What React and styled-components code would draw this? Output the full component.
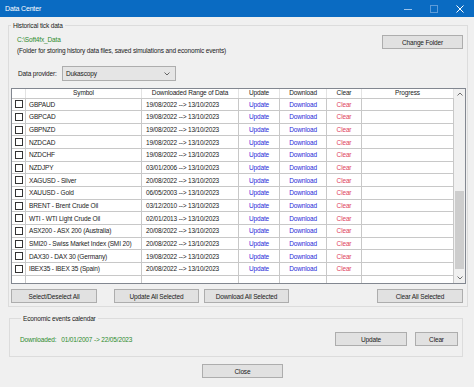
import React from 'react';
import styled, { createGlobalStyle } from 'styled-components';

const GlobalStyle = createGlobalStyle`
    html, body {
        margin: 0;
        padding: 0;
        background: #f0f0f0;
    }
    * {
        box-sizing: border-box;
    }
`

const symbols = [
    ['GBPAUD', '19/08/2022'],
    ['GBPCAD', '19/08/2022'],
    ['GBPNZD', '19/08/2022'],
    ['NZDCAD', '19/08/2022'],
    ['NZDCHF', '19/08/2022'],
    ['NZDJPY', '03/01/2006'],
    ['XAGUSD - Silver', '20/08/2022'],
    ['XAUUSD - Gold', '06/05/2003'],
    ['BRENT - Brent Crude Oil', '03/12/2010'],
    ['WTI - WTI Light Crude Oil', '02/01/2013'],
    ['ASX200 - ASX 200 (Australia)', '20/08/2022'],
    ['SMI20 - Swiss Market Index (SMI 20)', '20/08/2022'],
    ['DAX30 - DAX 30 (Germany)', '19/08/2022'],
    ['IBEX35 - IBEX 35 (Spain)', '20/08/2022'],
]

const COLS = '14px 116px 97px 41px 47px 35px 92px';

const App = () => {
    return (
        <Window>
            <GlobalStyle />
            <TitleBar>
                <Title>Data Center</Title>
                <Controls>
                    <svg width="8" height="8" viewBox="0 0 8 8"><path d="M0 4.5h8" stroke="#9cc3ea" strokeWidth="1" /></svg>
                    <svg width="8" height="8" viewBox="0 0 8 8"><rect x="0.5" y="0.5" width="7" height="7" fill="none" stroke="#5d9bd8" strokeWidth="1" /></svg>
                    <svg width="8" height="8" viewBox="0 0 8 8"><path d="M0.5 0.5l7 7M7.5 0.5l-7 7" stroke="#ffffff" strokeWidth="1" /></svg>
                </Controls>
            </TitleBar>

            <Content>
                <Group>
                    <Legend>Historical tick data</Legend>
                    <FolderRow>
                        <div>
                            <GreenText>C:\Soft4fx_Data</GreenText>
                            <Hint>(Folder for storing history data files, saved simulations and economic events)</Hint>
                        </div>
                        <Button $w={81}>Change Folder</Button>
                    </FolderRow>
                    <ProviderRow>
                        <Label>Data provider:</Label>
                        <Select>
                            <span>Dukascopy</span>
                            <svg width="6" height="4" viewBox="0 0 6 4"><path d="M0.5 0.5l2.5 2.5 2.5-2.5" fill="none" stroke="#555" strokeWidth="0.9" /></svg>
                        </Select>
                    </ProviderRow>

                    <Grid>
                        <GridBody>
                            <HeaderRow>
                                <HeadCell />
                                <HeadCell>Symbol</HeadCell>
                                <HeadCell>Downloaded Range of Data</HeadCell>
                                <HeadCell>Update</HeadCell>
                                <HeadCell>Download</HeadCell>
                                <HeadCell>Clear</HeadCell>
                                <HeadCell>Progress</HeadCell>
                            </HeaderRow>
                            {symbols.map(([name, from]) => (
                                <Row key={name}>
                                    <Cell $align="center"><Check /></Cell>
                                    <Cell>{name}</Cell>
                                    <Cell $pad={4}>{from} --&gt; 13/10/2023</Cell>
                                    <Cell $align="center" $color="#2a2ad8">Update</Cell>
                                    <Cell $align="center" $color="#2a2ad8">Download</Cell>
                                    <Cell $align="center" $color="#e0405e">Clear</Cell>
                                    <Cell />
                                </Row>
                            ))}
                            <Row>
                                <Cell /><Cell /><Cell /><Cell /><Cell /><Cell /><Cell />
                            </Row>
                        </GridBody>
                        <ScrollBar>
                            <Arrow>
                                <svg width="6" height="4" viewBox="0 0 6 4"><path d="M0.5 3.5l2.5-2.5 2.5 2.5" fill="none" stroke="#606060" strokeWidth="0.9" /></svg>
                            </Arrow>
                            <Track>
                                <Thumb />
                            </Track>
                            <Arrow>
                                <svg width="6" height="4" viewBox="0 0 6 4"><path d="M0.5 0.5l2.5 2.5 2.5-2.5" fill="none" stroke="#606060" strokeWidth="0.9" /></svg>
                            </Arrow>
                        </ScrollBar>
                    </Grid>

                    <ButtonBar>
                        <Button $w={86}>Select/Deselect All</Button>
                        <Button $w={85} $ml={17}>Update All Selected</Button>
                        <Button $w={85} $ml={5}>Download All Selected</Button>
                        <Button $w={86} $ml="auto">Clear All Selected</Button>
                    </ButtonBar>
                </Group>

                <EventsGroup>
                    <Legend>Economic events calendar</Legend>
                    <EventsRow>
                        <GreenText>Downloaded:&nbsp;&nbsp;&nbsp;01/01/2007 -&gt; 22/05/2023</GreenText>
                        <Button $w={72} $ml="auto">Update</Button>
                        <Button $w={43} $ml={8}>Clear</Button>
                    </EventsRow>
                </EventsGroup>

                <Footer>
                    <Button $w={81}>Close</Button>
                </Footer>
            </Content>
        </Window>
    )
}

export default App;

const Window = styled.div`
    width: 474px;
    height: 387px;
    background: #f0f0f0;
    display: flex;
    flex-direction: column;
    font-family: "Liberation Sans", Arial, sans-serif;
    font-size: 6.5px;
    letter-spacing: -0.15px;
    color: #1a1a1a;
    overflow: hidden;
`
const TitleBar = styled.div`
    height: 17px;
    background: #0a6bc2;
    display: flex;
    align-items: center;
    justify-content: space-between;
    padding: 0 10px 0 5px;
`
const Title = styled.span`
    color: #ffffff;
    font-size: 7px;
`
const Controls = styled.div`
    display: flex;
    align-items: center;
    gap: 18px;
    svg{
        display: block;
    }
`
const Content = styled.div`
    display: flex;
    flex-direction: column;
    padding: 4px 6px 0 8px;
`
const Group = styled.fieldset`
    margin: 0;
    padding: 0 2px 0 1px;
    border: 1px solid #dcdcdc;
    height: 286px;
    min-width: 0;
`
const Legend = styled.legend`
    padding: 0 2px;
    margin-left: 1px;
    line-height: 9px;
    color: #1a1a1a;
`
const FolderRow = styled.div`
    display: flex;
    justify-content: space-between;
    align-items: flex-start;
    padding: 0 2px 0 7px;
    margin-top: 5px;
`
const GreenText = styled.div`
    color: #2e8b2e;
    line-height: 9px;
`
const Hint = styled.div`
    line-height: 9px;
    margin-top: 2px;
`
const Button = styled.div`
    width: ${props => props.$w}px;
    height: 14px;
    margin-left: ${props => props.$ml === 'auto' ? 'auto' : `${props.$ml || 0}px`};
    background: #e1e1e1;
    border: 1px solid #adadad;
    display: flex;
    align-items: center;
    justify-content: center;
    color: #1a1a1a;
    white-space: nowrap;
    flex-shrink: 0;
`
const ProviderRow = styled.div`
    display: flex;
    align-items: center;
    padding-left: 8px;
    margin-top: 11px;
`
const Label = styled.span`
    width: 44px;
`
const Select = styled.div`
    width: 114px;
    height: 15px;
    background: #e5e5e5;
    border: 1px solid #adadad;
    display: flex;
    align-items: center;
    justify-content: space-between;
    padding: 0 5px 0 3px;
    svg{
        display: block;
    }
`
const Grid = styled.div`
    margin: 7px 0 0 1px;
    width: 455px;
    height: 196px;
    border: 1px solid #828790;
    background: #ffffff;
    display: flex;
    overflow: hidden;
`
const GridBody = styled.div`
    width: 442px;
    display: flex;
    flex-direction: column;
`
const HeaderRow = styled.div`
    display: grid;
    grid-template-columns: ${COLS};
    height: 9.5px;
    flex-shrink: 0;
    border-bottom: 1px solid #c8c8c8;
`
const HeadCell = styled.div`
    display: flex;
    align-items: center;
    justify-content: center;
    border-right: 1px solid #e3e3e3;
    line-height: 8px;
    white-space: nowrap;
`
const Row = styled.div`
    display: grid;
    grid-template-columns: ${COLS};
    height: 12.67px;
    flex-shrink: 0;
    border-bottom: 1px solid #c8c8c8;
`
const Cell = styled.div`
    display: flex;
    align-items: center;
    justify-content: ${props => props.$align === 'center' ? 'center' : 'flex-start'};
    padding-left: ${props => props.$align === 'center' ? 0 : (props.$pad || 3)}px;
    border-right: 1px solid #c8c8c8;
    color: ${props => props.$color || '#1a1a1a'};
    white-space: nowrap;
    overflow: hidden;
`
const Check = styled.span`
    width: 8px;
    height: 8px;
    border: 1px solid #333333;
    background: #ffffff;
`
const ScrollBar = styled.div`
    width: 11px;
    background: #f0f0f0;
    display: flex;
    flex-direction: column;
`
const Arrow = styled.div`
    height: 10px;
    display: flex;
    align-items: center;
    justify-content: center;
    svg{
        display: block;
    }
`
const Track = styled.div`
    flex: 1;
    display: flex;
    flex-direction: column;
    padding: 92px 1px 4px;
`
const Thumb = styled.div`
    flex: 1;
    background: #cdcdcd;
`
const ButtonBar = styled.div`
    display: flex;
    margin: 5px 2px 0 1px;
`
const EventsGroup = styled.fieldset`
    margin: 7px 5px 0 1px;
    padding: 0 4px 0 10px;
    border: 1px solid #dcdcdc;
    height: 43px;
    min-width: 0;
`
const EventsRow = styled.div`
    display: flex;
    align-items: center;
    margin-top: 9px;
`
const Footer = styled.div`
    display: flex;
    justify-content: center;
    margin: 7px 0 0 9px;
`
